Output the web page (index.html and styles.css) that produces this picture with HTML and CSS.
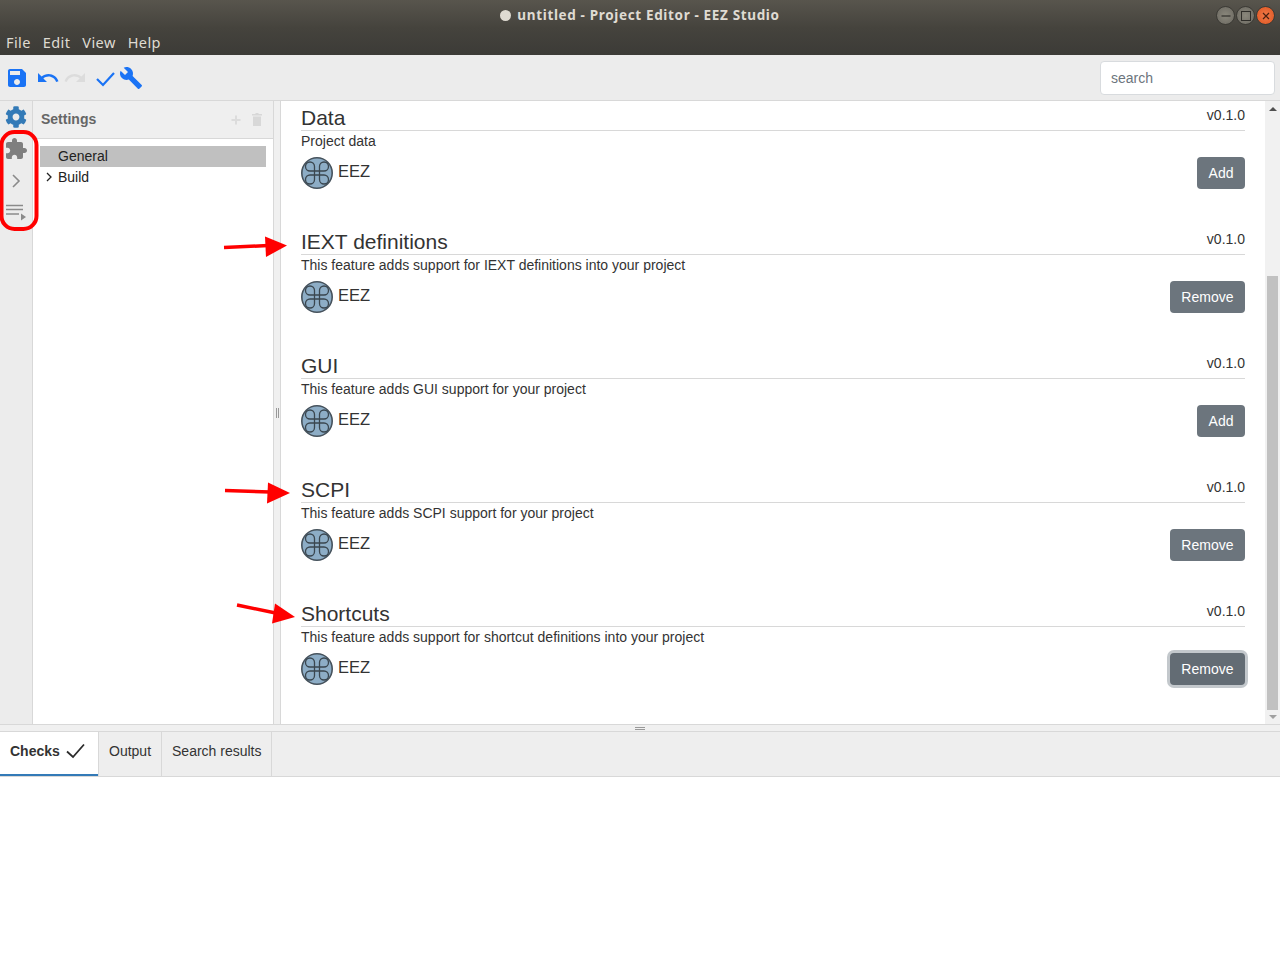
FILE: index.html
```html
<!DOCTYPE html>
<html lang="en">
<head>
<meta charset="utf-8">
<title>untitled - Project Editor - EEZ Studio</title>
<link rel="stylesheet" href="styles.css">
</head>
<body>
<svg class="defs" width="0" height="0" aria-hidden="true">
  <symbol id="eez" viewBox="0 0 32 32">
    <circle cx="16" cy="16" r="15.200" fill="#8dadc6" stroke="#46525c" stroke-width="1.600"/>
    <path d="M13.500 13.500V9.500a4.500 4.500 0 1 0-4.500 4.500H23a4.500 4.500 0 1 0-4.500-4.500V22.500a4.500 4.500 0 1 0 4.500-4.500H9a4.500 4.500 0 1 0 4.500 4.500Z" fill="none" stroke="#3a464f" stroke-width="1.300"/>
  </symbol>
</svg>
<div class="app">
  <header class="titlebar">
    <div class="title"><span class="dot"></span>untitled - Project Editor - EEZ Studio</div>
    <div class="winbtns">
      <span class="winbtn"><svg width="16" height="16" viewBox="0 0 16 16"><path d="M3.500 8h9" stroke="#2f2e2a" stroke-width="1.200"/></svg></span>
      <span class="winbtn"><svg width="16" height="16" viewBox="0 0 16 16"><rect x="3.500" y="3.500" width="9" height="9" fill="none" stroke="#2f2e2a"/></svg></span>
      <span class="winbtn close"><svg width="16" height="16" viewBox="0 0 16 16"><path d="M5 5l6 6M11 5l-6 6" stroke="#4a2010" stroke-width="1.200"/></svg></span>
    </div>
  </header>
  <nav class="menubar"><span>File</span><span>Edit</span><span>View</span><span>Help</span></nav>
  <div class="toolbar">
    <div class="tools">
      <svg class="tool" width="24" height="24" viewBox="0 0 24 24"><path fill="#1a73f5" d="M17 3H5c-1.110 0-2 .9-2 2v14c0 1.100.89 2 2 2h14c1.100 0 2-.9 2-2V7l-4-4zm-5 16c-1.660 0-3-1.340-3-3s1.340-3 3-3 3 1.340 3 3-1.340 3-3 3zm3-10H5V5h10v4z"/></svg>
      <svg class="tool undo" width="24" height="24" viewBox="0 0 24 24"><path fill="#1a73f5" d="M12.500 8c-2.650 0-5.050.99-6.900 2.600L2 7v9h9l-3.620-3.620c1.390-1.160 3.160-1.880 5.120-1.880 3.540 0 6.550 2.310 7.600 5.500l2.370-.78C21.080 11.030 17.150 8 12.500 8z"/></svg>
      <svg class="tool redo" width="24" height="24" viewBox="0 0 24 24"><path fill="#dcdcdc" d="M18.400 10.600C16.550 8.990 14.150 8 11.500 8c-4.650 0-8.580 3.030-9.960 7.220L3.900 16c1.050-3.190 4.050-5.500 7.600-5.500 1.950 0 3.730.72 5.120 1.880L13 16h9V7l-3.600 3.600z"/></svg>
      <svg class="tool check" width="22" height="24" viewBox="0 0 22 24"><path d="M2 13l6 6L19 7" fill="none" stroke="#1a73f5" stroke-width="2.200"/></svg>
      <svg class="tool wrench" width="24" height="24" viewBox="0 0 24 24"><path fill="#1a73f5" d="M22.700 19l-9.100-9.100c.9-2.300.4-5-1.500-6.900-2-2-5-2.400-7.400-1.300L9 6 6 9 1.600 4.700C.4 7.100.9 10.100 2.900 12.100c1.900 1.900 4.600 2.400 6.900 1.500l9.100 9.100c.4.4 1 .4 1.400 0l2.300-2.300c.5-.4.5-1.100.1-1.400z"/></svg>
    </div>
    <input class="search" type="text" placeholder="search">
  </div>
  <main class="workspace">
    <aside class="rail">
      <svg width="22" height="22" viewBox="0 0 512 512"><path fill="#337ab7" d="M487.400 315.700l-42.600-24.600c4.300-23.200 4.300-47 0-70.200l42.600-24.600c4.900-2.800 7.100-8.600 5.500-14-11.100-35.600-30-67.800-54.700-94.600-3.800-4.100-10-5.100-14.800-2.300L380.800 110c-17.900-15.400-38.500-27.300-60.800-35.100V25.800c0-5.600-3.900-10.500-9.400-11.700-36.700-8.200-74.300-7.800-109.200 0-5.500 1.200-9.400 6.100-9.400 11.700V75c-22.200 7.900-42.800 19.800-60.800 35.100L88.700 85.500c-4.900-2.800-11-1.900-14.800 2.300-24.700 26.700-43.600 58.900-54.700 94.600-1.700 5.400.6 11.200 5.500 14L67.300 221c-4.300 23.200-4.300 47 0 70.200l-42.600 24.600c-4.900 2.800-7.100 8.600-5.500 14 11.100 35.600 30 67.800 54.700 94.600 3.800 4.100 10 5.100 14.800 2.300l42.600-24.600c17.900 15.400 38.500 27.300 60.800 35.100v49.200c0 5.600 3.900 10.500 9.400 11.700 36.700 8.200 74.300 7.800 109.200 0 5.500-1.200 9.400-6.100 9.400-11.700v-49.200c22.200-7.900 42.800-19.800 60.800-35.100l42.600 24.600c4.900 2.800 11 1.900 14.800-2.300 24.700-26.700 43.600-58.900 54.700-94.600 1.500-5.500-.7-11.300-5.600-14.100zM256 336c-44.100 0-80-35.900-80-80s35.900-80 80-80 80 35.900 80 80-35.900 80-80 80z"/></svg>
      <svg class="rail-puzzle" width="24" height="24" viewBox="0 0 24 24"><path fill="#7f7f7f" d="M20.500 11H19V7c0-1.100-.9-2-2-2h-4V3.500C13 2.120 11.880 1 10.500 1S8 2.120 8 3.500V5H4c-1.100 0-1.990.9-1.990 2v3.800H3.500c1.490 0 2.700 1.210 2.700 2.700s-1.210 2.700-2.700 2.700H2V20c0 1.100.9 2 2 2h3.800v-1.500c0-1.490 1.210-2.700 2.700-2.700 1.490 0 2.700 1.210 2.700 2.700V22H17c1.100 0 2-.9 2-2v-4h1.500c1.380 0 2.500-1.120 2.500-2.500S21.880 11 20.500 11z"/></svg>
      <svg width="24" height="24" viewBox="0 0 24 24"><path d="M9 6l6 6-6 6" fill="none" stroke="#8a8a8a" stroke-width="1.600"/></svg>
      <svg class="rail-list" width="22" height="22" viewBox="0 0 22 22"><path d="M1 5.500h17M1 9.500h17M1 14h13" stroke="#8a8a8a" stroke-width="1.500"/><path d="M16 13.500l5 3.500-5 3.500z" fill="#8a8a8a"/></svg>
    </aside>
    <section class="sidebar">
      <div class="side-head">
        <span class="side-title">Settings</span>
        <span class="side-actions">
          <svg width="12" height="12" viewBox="0 0 12 12"><path d="M6 1.500v9M1.500 6h9" stroke="#dcdcdc" stroke-width="2"/></svg>
          <svg width="10" height="13" viewBox="0 0 10 13"><path d="M3.500 0h3v1H10v1.500H0V1h3.500zM1 3.500h8V13H1z" fill="#d8d8d8"/></svg>
        </span>
      </div>
      <ul class="tree">
        <li class="selected"><span class="twist"></span>General</li>
        <li><span class="twist"><svg width="8" height="10" viewBox="0 0 8 10"><path d="M2 1l4 4-4 4" fill="none" stroke="#222" stroke-width="1.300"/></svg></span>Build</li>
      </ul>
    </section>
    <div class="vsplit"><span class="grip-v"></span></div>
    <section class="features">
      <article class="feature">
        <div class="feature-head"><h2>Data</h2><span class="ver">v0.1.0</span></div>
        <p>Project data</p>
        <div class="feature-row"><svg class="logo" width="32" height="32"><use href="#eez"/></svg><span class="vendor">EEZ</span><button class="btn">Add</button></div>
      </article>
      <article class="feature">
        <div class="feature-head"><h2>IEXT definitions</h2><span class="ver">v0.1.0</span></div>
        <p>This feature adds support for IEXT definitions into your project</p>
        <div class="feature-row"><svg class="logo" width="32" height="32"><use href="#eez"/></svg><span class="vendor">EEZ</span><button class="btn">Remove</button></div>
      </article>
      <article class="feature">
        <div class="feature-head"><h2>GUI</h2><span class="ver">v0.1.0</span></div>
        <p>This feature adds GUI support for your project</p>
        <div class="feature-row"><svg class="logo" width="32" height="32"><use href="#eez"/></svg><span class="vendor">EEZ</span><button class="btn">Add</button></div>
      </article>
      <article class="feature">
        <div class="feature-head"><h2>SCPI</h2><span class="ver">v0.1.0</span></div>
        <p>This feature adds SCPI support for your project</p>
        <div class="feature-row"><svg class="logo" width="32" height="32"><use href="#eez"/></svg><span class="vendor">EEZ</span><button class="btn">Remove</button></div>
      </article>
      <article class="feature">
        <div class="feature-head"><h2>Shortcuts</h2><span class="ver">v0.1.0</span></div>
        <p>This feature adds support for shortcut definitions into your project</p>
        <div class="feature-row"><svg class="logo" width="32" height="32"><use href="#eez"/></svg><span class="vendor">EEZ</span><button class="btn focused">Remove</button></div>
      </article>
    </section>
    <div class="scrollbar">
      <span class="arrow up"></span>
      <div class="track"><div class="thumb"></div></div>
      <span class="arrow down"></span>
    </div>
  </main>
  <div class="hsplit"><span class="grip-h"></span></div>
  <div class="tabs">
    <div class="tab active">Checks<svg width="20" height="16" viewBox="0 0 20 16"><path d="M1 8.500l6 5.500L18 1.500" fill="none" stroke="#2b2b2b" stroke-width="1.800"/></svg></div>
    <div class="tab">Output</div>
    <div class="tab last">Search results</div>
  </div>
  <div class="results"></div>
</div>
<svg class="annotations" width="1280" height="960" viewBox="0 0 1280 960" aria-hidden="true">
  <rect x="1.500" y="132" width="35" height="97" rx="13" fill="none" stroke="#f00" stroke-width="4"/>
  <path d="M224 247.500L268 245.500" stroke="#f00" stroke-width="3.500"/>
  <path d="M287 245.500L265 236.500L266 257Z" fill="#f00"/>
  <path d="M225 490.500L270 492" stroke="#f00" stroke-width="3.500"/>
  <path d="M290 493L268 482.500L267 503.500Z" fill="#f00"/>
  <path d="M237 605L278 613.500" stroke="#f00" stroke-width="3.500"/>
  <path d="M295 617L275 603.500L272 623.500Z" fill="#f00"/>
</svg>
</body>
</html>
```

FILE: styles.css
```css
* { box-sizing: border-box; }
html, body { margin: 0; padding: 0; background: #fff; }
body {
  font-family: "Liberation Sans", Arial, sans-serif;
  font-size: 14px;
  color: #333;
  overflow: hidden;
}
.defs { position: absolute; }
.app { width: 1280px; height: 960px; display: flex; flex-direction: column; }

.titlebar {
  height: 28px;
  flex: none;
  display: flex;
  align-items: center;
  justify-content: center;
  position: relative;
  background: linear-gradient(#58554d, #45433d);
  padding-top: 2px;
}
.title {
  display: flex;
  align-items: center;
  color: #dfdbd2;
  font-family: "Noto Sans", sans-serif;
  font-weight: 700;
  font-size: 13.500px;
  letter-spacing: .65px;
}
.dot { width: 11px; height: 11px; border-radius: 50%; background: #dfdbd2; margin-right: 6px; }
.winbtns { position: absolute; right: 5px; top: 6px; display: flex; gap: 1px; }
.winbtn {
  width: 19px; height: 19px; border-radius: 50%;
  background: radial-gradient(#8a877c, #6a6860);
  display: flex; align-items: center; justify-content: center;
  border: 1px solid #3b3a35;
}
.winbtn.close { background: radial-gradient(#f07a48, #de5420); }

.menubar {
  height: 27px;
  flex: none;
  display: flex;
  align-items: center;
  gap: 12px;
  padding: 1px 0 0 6px;
  background: linear-gradient(#45433d, #3c3b37);
  color: #dfdbd2;
  font-family: "Noto Sans", sans-serif;
  font-size: 14.500px;
  letter-spacing: .4px;
}

.toolbar {
  height: 46px;
  flex: none;
  display: flex;
  align-items: center;
  justify-content: space-between;
  padding: 0 5px 0 5px;
  background: #ececec;
  border-bottom: 1px solid #d8d8d8;
}
.tools { display: flex; align-items: center; }
.tool { display: block; }
.undo { margin-left: 7px; }
.redo { margin-left: 3px; }
.check { margin-left: 8px; }
.wrench { margin-left: 2px; }
.search {
  width: 175px;
  height: 34px;
  border: 1px solid #d8dbde;
  border-radius: 4px;
  background: #fff;
  padding: 0 10px;
  font: 14px "Liberation Sans", Arial, sans-serif;
}
.search::placeholder { color: #6c757d; opacity: 1; }

.workspace { height: 623px; flex: none; display: flex; overflow: hidden; background: #fff; }

.rail {
  width: 33px;
  flex: none;
  background: #ececec;
  border-right: 1px solid #d8d8d8;
  display: flex;
  flex-direction: column;
  align-items: center;
  padding-top: 5px;
  gap: 8px;
}
.rail svg { display: block; }
.rail-puzzle { margin-top: 1px; }
.rail-list { margin-top: -1px; }

.sidebar { width: 241px; flex: none; background: #fff; border-right: 1px solid #d8d8d8; }
.side-head {
  height: 38px;
  background: #efefef;
  border-bottom: 1px solid #d8d8d8;
  display: flex;
  align-items: center;
  justify-content: space-between;
  padding: 0 11px 2px 8px;
}
.side-title { font-weight: 700; color: #666; }
.side-actions { display: flex; align-items: center; gap: 10px; padding-top: 2px; }
.tree { list-style: none; margin: 0; padding: 7px 7px 0 7px; }
.tree li { height: 21px; line-height: 20px; display: flex; align-items: center; color: #222; padding-bottom: 1px; }
.tree li.selected { background: #c0c0c0; }
.twist { width: 18px; display: flex; align-items: center; justify-content: center; }

.vsplit { width: 7px; flex: none; background: #f0f0f0; border-right: 1px solid #d8d8d8; display: flex; align-items: center; justify-content: center; }
.grip-v { width: 3px; height: 10px; border-left: 1px solid #999; border-right: 1px solid #999; }

.features { width: 984px; flex: none; padding: 0 20px; overflow: hidden; }
.feature { height: 124px; }
.feature-head {
  height: 30px;
  display: flex;
  justify-content: space-between;
  align-items: flex-end;
  border-bottom: 1px solid #d8d8d8;
}
.feature-head h2 { margin: 0; font-size: 21px; font-weight: 400; line-height: 24px; color: #333; }
.ver { align-self: flex-start; line-height: 16px; margin-top: 6px; color: #333; }
.feature p { margin: 0; height: 20px; line-height: 20px; color: #333; }
.feature-row { margin-top: 6px; height: 32px; display: flex; align-items: flex-start; }
.logo { display: block; flex: none; }
.vendor { margin-left: 5px; font-size: 16.500px; line-height: 28px; color: #333; }
.btn {
  margin-left: auto;
  height: 32px;
  padding: 0 11.500px;
  border: 0;
  border-radius: 4px;
  background: #6c757d;
  color: #fff;
  font: 14px "Liberation Sans", Arial, sans-serif;
}
.btn.focused { background: #636c74; box-shadow: 0 0 0 3px #c3c8cc; }

.scrollbar { width: 15px; flex: none; background: #f1f1f1; display: flex; flex-direction: column; align-items: center; }
.arrow { width: 0; height: 0; flex: none; border-left: 4px solid transparent; border-right: 4px solid transparent; }
.arrow.up { border-bottom: 4px solid #505050; margin: 6px 0 5px; }
.arrow.down { border-top: 4px solid #a0a0a0; margin: 5px 0 5px; }
.track { flex: 1; width: 100%; padding-top: 160px; }
.thumb { height: 100%; margin: 0 2px; background: #c1c1c1; }

.hsplit { height: 8px; flex: none; background: #f0f0f0; border-top: 1px solid #d8d8d8; border-bottom: 1px solid #d8d8d8; display: flex; justify-content: center; }
.grip-h { width: 10px; height: 3px; border-top: 1px solid #999; border-bottom: 1px solid #999; margin-top: 2px; }

.tabs { height: 45px; flex: none; display: flex; background: #eee; border-bottom: 1px solid #d8d8d8; }
.tab {
  display: flex;
  align-items: center;
  gap: 6px;
  padding: 0 10px 6px;
  border-right: 1px solid #d8d8d8;
  color: #333;
  height: 100%;
}
.tab.last { padding-right: 9.500px; }
.tab.active {
  width: 99px;
  background: #fff;
  font-weight: 700;
  box-shadow: inset 0 -2px 0 #337ab7;
}
.results { flex: 1; background: #fff; }

.annotations { position: absolute; left: 0; top: 0; pointer-events: none; }
```
